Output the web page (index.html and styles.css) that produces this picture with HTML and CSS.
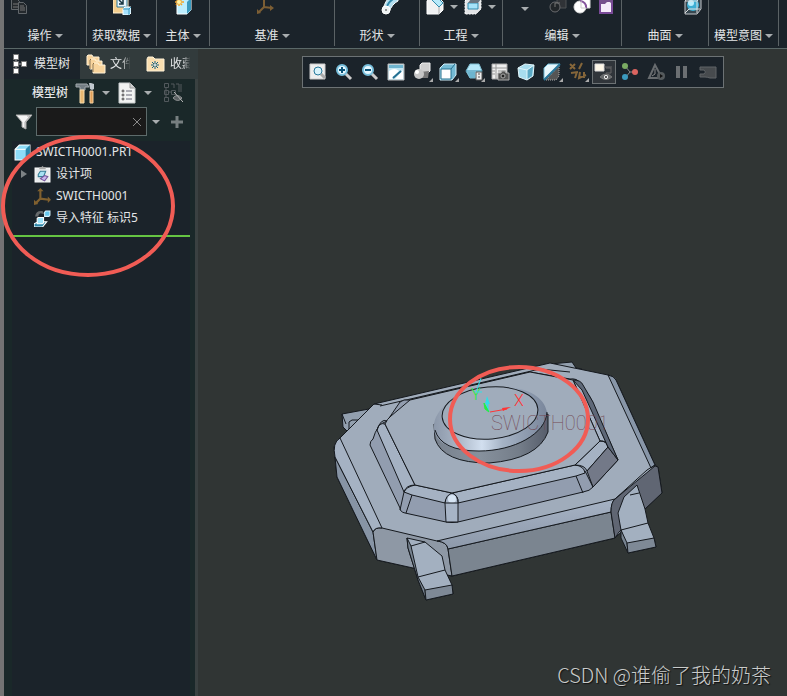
FILE: index.html
```
<!DOCTYPE html>
<html lang="zh-CN">

<head>
    <meta charset="UTF-8">
    <meta name="viewport" content="width=device-width, initial-scale=1.0">
    <link rel="stylesheet" href="styles.css">
    <title>SWICTH0001.PRT</title>
</head>

<body>
    <div class="ribbon">
        <div class="group">
            <div class="icons icons-start">
                <svg class="icon" viewBox="0 0 18 18"><g fill="#24292d" stroke="#62676b"><path d="M1.500 2.500h6l2 2v8h-8z"/><path d="M8.500 5.500h5l3 3v8h-8z"/></g><path d="M3 7h5M3 10h5M10 9h4M10 11h5M10 13h5" stroke="#777"/></svg>
            </div>
            <button class="group-label">操作<span class="caret"></span></button>
        </div>
        <div class="group">
            <div class="icons">
                <svg class="icon" viewBox="0 0 18 18"><path d="M0 0h15v16H0z" fill="#f4ce8e" stroke="#fff0d0"/><path d="M4 0h10v10H4z" fill="#e8f5fc" stroke="#2d7899"/><path d="M6 3l4 4M10 3v4H6" stroke="#173642" stroke-width="1.500" fill="none"/><path d="M10 12l2-2h6v6l-2 2h-6z" fill="#a5e1fc" stroke="#fff"/><path d="M10 12h6v6M16 12l2-2" stroke="#3999be" fill="none"/></svg>
            </div>
            <button class="group-label">获取数据<span class="caret"></span></button>
        </div>
        <div class="group">
            <div class="icons">
                <svg class="icon" viewBox="0 0 18 18"><path d="M3 4l3-3h11v12l-4 4H3z" fill="#bdeeff" stroke="#fff"/><path d="M13 5l4-4v12l-4 4z" fill="#3b9bc0"/><path d="M5 0v9M1 5h9M2 2l6 6M8 2L2 8" stroke="#f5a62b" stroke-width="1.500"/><circle cx="5" cy="5" r="2" fill="#fff3a8"/></svg>
            </div>
            <button class="group-label">主体<span class="caret"></span></button>
        </div>
        <div class="group">
            <div class="icons icons-axis">
                <svg class="icon" viewBox="0 0 18 18"><path d="M8 0v10L3 15M8 10l8 1" fill="none" stroke="#7c5e34" stroke-width="2"/><path d="M1 12l4 4-4 1zM14 8l4 3-4 3z" fill="#7c5e34"/></svg>
            </div>
            <button class="group-label">基准<span class="caret"></span></button>
        </div>
        <div class="group">
            <div class="icons icons-sweep">
                <svg class="icon" viewBox="0 0 18 18"><path d="M2 12Q5 2 10-1h7v5q-6 3-9 11z" fill="#b4dfef" stroke="#fff"/><path d="M6 9Q9 3 14 1" stroke="#338bad" stroke-width="2" fill="none"/><circle cx="5" cy="13" r="4" fill="#eef3f4" stroke="#fff"/><circle cx="5" cy="13" r="1" fill="#777"/></svg>
            </div>
            <button class="group-label">形状<span class="caret"></span></button>
        </div>
        <div class="group">
            <div class="icons icons-spread">
                <svg class="icon" viewBox="0 0 18 18"><path d="M1 4l3-4h8l5 5v8l-4 4H1z" fill="#f0f1f2" stroke="#fff"/><path d="M6 0h5l6 6-4 4-7-7z" fill="#b7e9fa" stroke="#338bad"/><path d="M13 10v7" stroke="#aaa"/></svg>
                <span class="caret"></span>
                <svg class="icon" viewBox="0 0 18 18"><path d="M1 4l4-4h12v12l-5 5H1z" fill="#e2e4e6" stroke="#fff" stroke-dasharray="2 1"/><path d="M4 6h10v6H4z" fill="#a6e3f9" stroke="#338bad"/><path d="M4 6l3-4h10l-3 4" fill="#697580"/></svg>
                <span class="caret"></span>
            </div>
            <button class="group-label">工程<span class="caret"></span></button>
        </div>
        <div class="group">
            <div class="icons icons-edit">
                <span class="caret"></span>
                <span class="spacer"></span>
                <svg class="icon" viewBox="0 0 18 18"><path d="M8 0h9v11H8z" fill="#303337" stroke="#4f5255"/><circle cx="6" cy="10" r="5" fill="#222629" stroke="#6a6b6e"/><path d="M6 10V6h5" stroke="#777" fill="none"/></svg>
                <svg class="icon" viewBox="0 0 18 18"><path d="M8 0h9v11H8z" fill="#fff" stroke="#ddd"/><circle cx="7" cy="10" r="6" fill="#fff" stroke="#ddd"/><path d="M7 4a6 6 0 0 1 6 7" fill="none" stroke="#85569d" stroke-width="2"/><path d="M8 4v7h5" fill="none" stroke="#ccc"/></svg>
                <svg class="icon" viewBox="0 0 18 18"><path d="M3 4h12v12H3z" fill="#f5ecfa" stroke="#7a4a98" stroke-width="2"/><path d="M0 0h18l-4 6q-3-3-6 1L4 7z" fill="#76518d"/></svg>
            </div>
            <button class="group-label">编辑<span class="caret"></span></button>
        </div>
        <div class="group">
            <div class="icons icons-end">
                <svg class="icon" viewBox="0 0 18 18"><path d="M1 4l4-4h12v12l-4 5H1z" fill="#384750" stroke="#c5c8cb"/><circle cx="9" cy="8" r="6" fill="#3caed3"/><circle cx="7" cy="6" r="3" fill="#b8edfc"/><path d="M1 4h12v12M13 4l4-4M1 16l4-4h11" fill="none" stroke="#ddd"/></svg>
            </div>
            <button class="group-label">曲面<span class="caret"></span></button>
        </div>
        <div class="group">
            <div class="icons"></div>
            <button class="group-label">模型意图<span class="caret"></span></button>
        </div>
    </div>

    <div class="main">
        <aside class="sidebar">
            <div class="tabs">
                <button class="tab active">
                    <svg class="tab-icon" viewBox="0 0 20 20"><path d="M6 3v14M6 10h8" stroke="#aaa"/><g fill="#fff" stroke="#777"><path d="M3.500.5h5v5h-5zM3.500 7.500h5v5h-5zM3.500 14.500h5v5h-5zM11.500 7.500h5v5h-5z"/></g></svg>
                    <span>模型树</span>
                </button>
                <button class="tab">
                    <svg class="tab-icon" viewBox="0 0 20 20"><g fill="#f8d49c" stroke="#fff2d7"><path d="M1 2l1-1h4l1 2h6v8H1z"/><path d="M4 6l1-1h4l1 2h6v8H4z"/><path d="M7 10l1-1h4l1 2h6v8H7z"/></g><path d="M4 15V6l1-1M7 18v-8l1-1" stroke="#8a6c3e" fill="none"/></svg>
                    <span class="fade">文件</span>
                </button>
                <button class="tab">
                    <svg class="tab-icon" viewBox="0 0 20 20"><path d="M1 5l1-2h5l2 2h9v12H1z" fill="#f9deb0" stroke="#fff2d7"/><path d="M9 7v8M5 11h8M6 8l6 6M12 8l-6 6" stroke="#176080"/><circle cx="9" cy="11" r="1" fill="#fff"/></svg>
                    <span class="fade">收藏</span>
                </button>
            </div>

            <div class="tree-header">
                <strong>模型树</strong>
                <button class="tool" aria-label="设置">
                    <svg viewBox="0 0 20 22"><path d="M1 2h11l2 3h-4v3H5V5H1z" fill="#737d83" stroke="#a1a8ac"/><path d="M5 8h4v13H5z" fill="#e9b871" stroke="#f5dbad"/><path d="M14 1l1 6 2 1 2-1V2l-3-1" fill="#c1c8ce"/><path d="M15 9h3v12h-3z" fill="#df9f59" stroke="#f5d0a0"/></svg>
                </button>
                <span class="caret"></span>
                <button class="tool" aria-label="显示">
                    <svg viewBox="0 0 20 22"><path d="M2 1h11l5 5v15H2z" fill="#f1f3f2" stroke="#c9cdce"/><path d="M13 1v5h5" fill="#ccc" stroke="#999"/><path d="M9 9h6M9 13h6M9 17h6" stroke="#667"/><g fill="#fff" stroke="#444"><circle cx="6" cy="9" r="1"/><circle cx="6" cy="13" r="1"/><circle cx="6" cy="17" r="1"/></g></svg>
                </button>
                <span class="caret"></span>
                <button class="tool tool-last" aria-label="隐藏">
                    <svg viewBox="0 0 20 22"><g fill="none" stroke="#52595d"><path d="M1.500 1.500h4v4h-4zM1.500 8.500h4v4h-4zM1.500 15.500h4v4h-4zM8.500 8.500h4v4h-4zM3 5v11M6 10h3M8 2h3v4M13 2h3v8M18 2v8"/></g><path d="M10 16q4-5 9 0-4 5-9 0z" fill="#5a5f62" stroke="#909394"/><path d="M11 10l9 10" stroke="#bbb"/></svg>
                </button>
            </div>

            <div class="search-row">
                <svg class="filter" viewBox="0 0 18 18"><path d="M1 2h16l-6 7v7l-4-2V9z" fill="#f4f4f4" stroke="#aaa"/><path d="M12 3h3l-5 6v6" fill="none" stroke="#aaa"/></svg>
                <div class="search">
                    <input type="text" aria-label="搜索模型树">
                    <button class="clear" aria-label="清除"><svg viewBox="0 0 8 8"><path d="M0 0l8 8M8 0L0 8" stroke="#8a8a8a"/></svg></button>
                </div>
                <span class="caret"></span>
                <button class="plus" aria-label="添加"><svg viewBox="0 0 12 12"><path d="M6 0v12M0 6h12" stroke="#777f80" stroke-width="3"/></svg></button>
            </div>

            <div class="tree">
                <div class="node root">
                    <svg viewBox="0 0 16 16"><path d="M1 5l4-4h10v10l-4 4H1z" fill="#8edcf8" stroke="#fff"/><path d="M11 5l4-4v10l-4 4z" fill="#2b87ac"/><path d="M1 5h10" stroke="#fff"/></svg>
                    <span>SWICTH0001.PRT</span>
                </div>
                <div class="node">
                    <span class="expander"></span>
                    <svg viewBox="0 0 16 16"><path d="M1 2h14v13H1z" fill="#e9ebed" stroke="#fff"/><path d="M5 3V1h2l1-1 1 1h2v2z" fill="#aaa"/><path d="M4 8l2-3h5l-2 5H4z" fill="#a9e1f3" stroke="#367e96"/><path d="M6 12l4-3 3 1-3 4z" fill="#c8b8ed" stroke="#77569d"/></svg>
                    <span>设计项</span>
                </div>
                <div class="node leaf">
                    <svg viewBox="0 0 16 16"><path d="M6 2v8l-4 4M6 10l8 1" fill="none" stroke="#80602f" stroke-width="2"/><path d="M3 3l3-3 3 3zM0 11l4 4-4 1zM13 8l3 3-3 3z" fill="#80602f"/></svg>
                    <span>SWICTH0001</span>
                </div>
                <div class="node leaf">
                    <svg viewBox="0 0 16 16"><path d="M1 6q1-6 7-5l2 3-4-1q-2 1-2 3z" fill="#686b6d"/><path d="M11 1h4v4l-1 1h-4V2z" fill="#66c7ed" stroke="#d7f4ff"/><path d="M0 13l4-2h8l-4 5H0z" fill="#2c86a8" stroke="#fff"/><path d="M3 8l1-1h5v5l-1 1H3z" fill="#9de4fb" stroke="#fff"/></svg>
                    <span>导入特征 标识5</span>
                </div>
                <div class="insert-line"></div>
            </div>
        </aside>

        <main class="viewport">
            <div class="view-toolbar">
                <button aria-label="重新调整"><svg viewBox="0 0 20 20"><path d="M2 2h15v15H2z" fill="#eee" stroke="#ccc"/><circle cx="10" cy="9" r="4" fill="#d9f3fb" stroke="#27789a"/><path d="M13 12l4 4" stroke="#aaa" stroke-width="3"/></svg></button>
                <button aria-label="放大"><svg viewBox="0 0 20 20"><path d="M11 11l6 6" stroke="#ccc" stroke-width="3"/><circle cx="8" cy="8" r="5" fill="#e5f8ff" stroke="#76bedb" stroke-width="2"/><path d="M5 8h6M8 5v6" stroke="#0c5478" stroke-width="2"/></svg></button>
                <button aria-label="缩小"><svg viewBox="0 0 20 20"><path d="M11 11l6 6" stroke="#ccc" stroke-width="3"/><circle cx="8" cy="8" r="5" fill="#e5f8ff" stroke="#76bedb" stroke-width="2"/><path d="M5 8h6" stroke="#0c5478" stroke-width="2"/></svg></button>
                <button aria-label="重画"><svg viewBox="0 0 20 20"><path d="M2 2h16v16H2z" fill="#c3e6f2" stroke="#bbb"/><path d="M3 3h14v3H3z" fill="#6fb5cf"/><path d="M3 17V9q6-4 10 0l-7 8zM17 8v9H9z" fill="#fff"/><path d="M7 16l8-7" stroke="#236f91" stroke-width="2"/></svg></button>
                <button class="more" aria-label="渲染"><svg viewBox="0 0 20 20"><path d="M8 3l2-2h8v8l-2 2H8z" fill="#cfcfcf" stroke="#eee"/><path d="M8 10l9-1-1 7H8z" fill="#777"/><circle cx="7" cy="12" r="5" fill="#c6c6c6"/><circle cx="5" cy="10" r="2" fill="#fff"/></svg></button>
                <button class="more" aria-label="显示样式"><svg viewBox="0 0 20 20"><path d="M2 6l4-4h12v11l-4 5H2z" fill="#74bad4" stroke="#d2eff9"/><path d="M3 7h10v10H3z" fill="#fff" stroke="#24708e"/><path d="M13 7l4-5" stroke="#24708e"/></svg></button>
                <button class="more" aria-label="已保存方向"><svg viewBox="0 0 20 20"><path d="M2 9l4-7h9l3 7-4 7H6z" fill="#b6e8f9" stroke="#7ebdd1"/><path d="M2 9h16" stroke="#348aaa" fill="none"/><path d="M3 10h8v6H6z" fill="#6db5cf"/><path d="M12 10h6v8h-6z" fill="#eee" stroke="#555"/><path d="M14 12h2M14 15h2" stroke="#555"/></svg></button>
                <button aria-label="视图管理器"><svg viewBox="0 0 20 20"><path d="M2 2h15v15H2z" fill="#eee" stroke="#aaa"/><path d="M2 6h15M6 2v15M8 9h8M2 9h3M2 12h3" stroke="#999"/><path d="M8 11h3l1-2h3l1 2h3v7H8z" fill="#555" stroke="#aaa"/><circle cx="13" cy="14" r="2" fill="#222" stroke="#aaa"/></svg></button>
                <button aria-label="透视图"><svg viewBox="0 0 20 20"><path d="M2 6l7-4 9 1-1 11-6 4-8-3z" fill="#a8ddee" stroke="#e2f6fb"/><path d="M11 8l6-4-1 10-5 3z" fill="#5ba9c4"/><path d="M2 6l9 2 7-5M11 8v10" stroke="#e2f6fb" fill="none"/></svg></button>
                <button class="more" aria-label="截面"><svg viewBox="0 0 20 20"><path d="M2 17V6l4-4h12z" fill="#e8f7fc" stroke="#6eb8d2"/><path d="M17 4v10l-3 4H4z" fill="#555" stroke="#aaa" stroke-dasharray="1 1"/><path d="M2 18L18 2" stroke="#2a779a" stroke-width="2"/></svg></button>
                <button class="more" aria-label="基准显示"><svg viewBox="0 0 20 20"><g stroke="#85663a" stroke-width="2" fill="none"><path d="M2 2l5 5M7 2L2 7M14 1l-3 6M9 10l-2 6M3 11l7-1M12 10l-1 6 7-3M16 10v6"/></g></svg></button>
                <button class="pressed" aria-label="注释显示"><svg viewBox="0 0 20 20"><path d="M1 2h9v7H1z" fill="#fff8e7" stroke="#ddd"/><path d="M12 6h5v5h-5M10 5h8" fill="none" stroke="#666"/><path d="M6 15q6-6 12 0-6 5-12 0z" fill="#66696b" stroke="#777"/><circle cx="12" cy="15" r="2" fill="#fff"/><circle cx="12" cy="15" r="1" fill="#222"/></svg></button>
                <button aria-label="旋转中心"><svg viewBox="0 0 20 20"><path d="M5 4l5 6-5 6M10 10h6" fill="none" stroke="#888"/><circle cx="5" cy="4" r="3" fill="#7bab63"/><circle cx="5" cy="15" r="3" fill="#3b9abe"/><circle cx="15" cy="10" r="3" fill="#db6460"/></svg></button>
                <button aria-label="仿真"><svg viewBox="0 0 20 20"><path d="M9 3L3 16h13z" fill="none" stroke="#686c6f" stroke-width="2"/><path d="M9 7v5l-3 2" stroke="#888" fill="none"/><circle cx="15" cy="14" r="4" fill="#555a5d"/><path d="M14 12l3 2-3 2z" fill="#111"/></svg></button>
                <button aria-label="暂停"><svg viewBox="0 0 20 20"><path d="M4 4h4v12H4zM11 4h4v12h-4z" fill="#6b6f72"/></svg></button>
                <button aria-label="结束"><svg viewBox="0 0 20 20"><path d="M2 5h16v11h-6q-3-1-5-1H2v-3h4q3-2 0-4H2z" fill="#474b4e" stroke="#606467"/></svg></button>
            </div>

            <svg class="model" viewBox="198 88 589 608" preserveAspectRatio="xMinYMin meet">
                <defs>
                    <linearGradient id="cap" x1="434" x2="548" y1="0" y2="0" gradientUnits="userSpaceOnUse">
                        <stop offset="0" stop-color="#8c98aa"/><stop offset=".18" stop-color="#a4b0c0"/><stop offset=".42" stop-color="#d2dfef"/><stop offset=".6" stop-color="#a5b3c5"/><stop offset="1" stop-color="#78859a"/>
                    </linearGradient>
                    <linearGradient id="wall" x1="434" x2="548" y1="0" y2="0" gradientUnits="userSpaceOnUse">
                        <stop offset="0" stop-color="#78818d"/><stop offset=".4" stop-color="#87919d"/><stop offset=".75" stop-color="#747d89"/><stop offset="1" stop-color="#565d6b"/>
                    </linearGradient>
                    <linearGradient id="rim" x1="0" x2="0" y1="0" y2="1">
                        <stop offset="0" stop-color="#a6b3c5"/><stop offset="1" stop-color="#8d99aa"/>
                    </linearGradient>
                </defs>
                <g stroke="#15191e" stroke-linejoin="round">
                    <!-- back contacts -->
                    <path d="M342 414l27-5 5-5 6 10-33 17-4-4z" fill="#929fae"/>
                    <path d="M342 414l4 10M349 430v-8l3-2h7" fill="none"/>
                    <path d="M550 364l22-2 4 6 6 1v6h-32z" fill="#929fae"/>
                    <!-- body -->
                    <path d="M374 404l176-41 58 12q6 1 8 5l39 85 3 2 4 26-17 16-30 29-163 38-39-8-36-8-40-83-3-30q1-6 6-9z" fill="#a0acbb"/>
                    <path d="M335 457l2 20 40 83-4-28z" fill="#8794a5"/>
                    <path d="M373 532q2-5 9-4l55 13q10 1 11 8l4 27-39-8-36-8z" fill="#8e98a5"/>
                    <path d="M448 549l163-37 4 26-163 38z" fill="#7b8590"/>
                    <path d="M437 541l178-42q-4 4-4 13l-163 37q-1-7-11-8z" fill="url(#rim)"/>
                    <path d="M611 512q0-10 4-13l40-33 3 1 4 26-17 16-26 23-4 6z" fill="#606673"/>
                    <path d="M340 438q-8 5-5 19l38 75q2-5 9-4z" fill="#a5b2c3"/>
                    <path d="M608 375q6 1 8 5l39 85-4 3z" fill="#8896a8"/>
                    <path d="M615 499l32-29 8-5M380 406l160-37 30 3M374 404l8 1" fill="none"/>
                    <!-- raised step -->
                    <path d="M370 445q0-4 3-6 4-15 14-18l13-19q3-3 10-2l120-28 40 7q7-1 10 4l10 14 28 63-25 27q-3 4-10 5l-125 30q-6 1-12 0l-41-9q-5-1-5-5z" fill="#929daf"/>
                    <path d="M377 430q2-8 8-6l30 61q-9 2-11 7zM404 492q2-7 11-7l37 8q-6 3-7 10l-33-8zM458 503q1-7-6-10l123-28q9 1 10 8l-9 3zM575 465l25-24q7 0 8 6l-21 24q-2-6-12-6zM573 380q6 0 9 5l26 62q-2-7-8-6z" fill="#a5b2c3"/>
                    <path d="M445 503q1-8 7-10 6 2 6 10v19h-12z" fill="#a7b4c6"/>
                    <ellipse cx="452" cy="499" rx="4" ry="4" fill="#d7e5f4" stroke="none"/>
                    <path d="M445 503h13" fill="none"/>
                    <path d="M587 471l21-24 10 13-25 27z" fill="#737988"/>
                    <path d="M573 380q8 0 10 5l10 17 25 58-10-13-26-57z" fill="#5e6878"/>
                    <path d="M410 400l120-28 43 8 27 61-25 24-123 28-37-8-30-61q2-5 6-8z" fill="#a0acbb"/>
                    <path d="M404 492l-4 18M412 495l-6 18M576 476l7 17M585 471l8 16M387 421q-6-3-10 9" fill="none"/>
                    <!-- push button -->
                    <path d="M434 424l1 15q8 24 54 24 49-4 59-31v-18z" fill="url(#wall)"/>
                    <path d="M434 428c-1-18 20-34 48-40 32-5 61 3 65 24 1 19-31 39-68 39-28 0-45-9-45-23z" fill="url(#cap)" stroke="none"/>
                    <path d="M435 430q6 21 44 21c35 0 67-17 68-39" fill="none"/>
                    <ellipse cx="490" cy="413" rx="48" ry="26" transform="rotate(-5 490 413)" fill="#a0acbb"/>
                    <!-- front contacts -->
                    <path d="M407 538l18 4 17 14 3 14 7 15 1 9-27 6-8-20-10-32z" fill="#a3b0c0"/>
                    <path d="M407 538l4 8 7 31 7 13 1 10-8-20-10-32z" fill="#778390"/>
                    <path d="M425 590l27-5 1 9-27 6z" fill="#7e8996"/>
                    <path d="M411 546l14-4M418 577l27-7" fill="none"/>
                    <path d="M637 485l8 24 3 14 6 15 2 9-28 6-7-23-3-17 6-16z" fill="#a3b0c0"/>
                    <path d="M621 530l6 13 1 10-7-15z" fill="#778390"/>
                    <path d="M627 543l27-5 2 9-28 6z" fill="#7e8996"/>
                    <path d="M630 495l9-2M621 530l27-7" fill="none"/>
                </g>
                <!-- coordinate system -->
                <path d="M488 411l-1-10" stroke="#30dfe6" stroke-width="2"/>
                <path d="M485 404l2-8 3 8z" fill="#30dfe6"/>
                <path d="M489 412l-5-9 1 6z" fill="#25ed43" stroke="#25ed43"/>
                <path d="M490 412l17-3" stroke="#ff3434"/>
                <path d="M502 408l9-1-8 4z" fill="#ff3434"/>
                <text class="axis axis-y" x="471" y="400">Y</text>
                <path d="M481 378l-5 14h6" fill="none" stroke="#30dfe6"/>
                <text class="axis axis-x" x="514" y="406">X</text>
                <text class="csys-name" x="491" y="430">SWICTH0001</text>
                <ellipse cx="519" cy="419" rx="69" ry="52" fill="none" stroke="#f15c55" stroke-width="4"/>
            </svg>
            <div class="watermark">CSDN @谁偷了我的奶茶</div>
        </main>
        <svg class="tree-mark" viewBox="0 0 176 144"><ellipse cx="88" cy="72" rx="85" ry="69" fill="none" stroke="#f15c55" stroke-width="4"/></svg>
    </div>
</body>

</html>
```
FILE: styles.css
```
* {
    margin: 0;
    padding: 0;
    box-sizing: border-box;
}

body {
    font-family: "Noto Sans", "Noto Sans CJK SC", sans-serif;
    font-size: 12px;
    line-height: 18px;
    color: #e4e6e7;
    background-color: #737373;
    padding-left: 4px;
    display: flex;
    flex-direction: column;
    height: 100vh;
    overflow: hidden;
}

button {
    font: inherit;
    color: inherit;
    background: none;
    border: none;
    cursor: pointer;
}

svg {
    display: block;
    flex-shrink: 0;
}

.caret {
    flex-shrink: 0;
    border: 4px solid transparent;
    border-top-color: #a9adaf;
    border-bottom: none;
}

/* Ribbon */
.ribbon {
    display: grid;
    grid-template-columns: 83fr 70fr 53fr 125fr 85fr 83fr 119fr 87fr 70fr 8fr;
    background-color: #1b232a;
    border-bottom: 1px solid #5b6868;
    padding-bottom: 2px;
}

.group {
    min-width: 0;
    border-right: 1px solid #5b6265;
}

.icons {
    display: flex;
    align-items: flex-start;
    justify-content: center;
    height: 26px;
    overflow: hidden;
}

.icon {
    width: 18px;
    height: 18px;
    margin-top: -3px;
}

.icons .caret {
    margin-top: 5px;
}

.icons-start {
    justify-content: flex-start;
    padding-left: 6px;
}

.icons-axis {
    padding-right: 14px;
}

.icons-sweep {
    padding-left: 26px;
}

.icons-spread {
    justify-content: space-between;
    padding: 0 6px;
}

.icons-edit {
    gap: 6px;
    justify-content: flex-end;
    padding-right: 6px;
}

.icons-edit .caret {
    margin-top: 7px;
}

.spacer {
    width: 8px;
}

.icons-end {
    justify-content: flex-end;
    padding-right: 6px;
}

.group-label {
    display: flex;
    align-items: center;
    justify-content: center;
    gap: 3px;
    width: 100%;
    height: 20px;
    white-space: nowrap;
}

.main {
    display: flex;
    flex: 1;
    min-height: 0;
    position: relative;
}

/* Model tree panel */
.sidebar {
    display: flex;
    flex-direction: column;
    width: 194px;
    flex-shrink: 0;
    background-color: #1a2829;
    border-right: 3px solid #3a4141;
}

.tabs {
    display: flex;
    height: 30px;
    margin-right: -3px;
    background-color: #323b3c;
}

.tab {
    display: flex;
    align-items: center;
    flex-shrink: 0;
    gap: 4px;
    padding: 0 6px;
    white-space: nowrap;
}

.tab.active {
    width: 76px;
    background-color: #1b232a;
}

.tab-icon {
    width: 20px;
    height: 20px;
}

.fade {
    -webkit-mask-image: linear-gradient(to right, #000 50%, transparent 85%);
    mask-image: linear-gradient(to right, #000 50%, transparent 85%);
}

.tree-header {
    display: flex;
    align-items: center;
    gap: 7px;
    height: 28px;
    padding-left: 28px;
}

.tree-header strong {
    font-weight: 500;
}

.tool svg {
    width: 20px;
    height: 22px;
}

.tool-last {
    margin-left: 4px;
}

.search-row {
    display: flex;
    align-items: center;
    height: 29px;
    padding-left: 11px;
}

.filter {
    width: 18px;
    height: 18px;
    margin-right: 3px;
}

.search {
    position: relative;
    width: 111px;
    margin-right: 5px;
}

.search input {
    display: block;
    width: 100%;
    height: 29px;
    padding: 0 20px 0 6px;
    color: inherit;
    font: inherit;
    background-color: #1a1a1a;
    border: 1px solid #5d6b6b;
}

.clear {
    position: absolute;
    top: 11px;
    right: 6px;
}

.clear svg {
    width: 8px;
    height: 8px;
}

.plus {
    margin-left: 11px;
}

.plus svg {
    width: 12px;
    height: 12px;
}

.tree {
    flex: 1;
    margin: 5px 5px 0 8px;
    background-color: #1b232a;
}

.node {
    display: flex;
    align-items: center;
    gap: 5px;
    height: 22px;
    padding-left: 9px;
    white-space: nowrap;
}

.node svg {
    width: 17px;
    height: 17px;
}

.node.root {
    padding-left: 2px;
}

.node.leaf {
    padding-left: 22px;
}

.expander {
    margin-right: 2px;
    border: 4px solid transparent;
    border-left: 6px solid #7d8285;
    border-right: none;
}

.insert-line {
    height: 2px;
    margin-top: 6px;
    background-color: #66c443;
}

.tree-mark {
    position: absolute;
    top: 85px;
    left: -4px;
    width: 176px;
    height: 144px;
    pointer-events: none;
}

/* Graphics area */
.viewport {
    position: relative;
    flex: 1;
    min-width: 0;
    background-color: #303534;
}

.view-toolbar {
    display: flex;
    width: fit-content;
    margin: 7px 0 0 104px;
    padding: 2px;
    background-color: #1b232a;
    border: 1px solid #6c7274;
}

.view-toolbar button {
    display: grid;
    place-items: center;
    position: relative;
    width: 26px;
    height: 26px;
}

.view-toolbar svg {
    width: 20px;
    height: 20px;
}

.view-toolbar .pressed {
    width: 24px;
    height: 24px;
    margin: 1px;
    background-color: #30353a;
    border: 1px solid #6c7274;
}

.more::after {
    content: "";
    position: absolute;
    right: 2px;
    bottom: 3px;
    border: 2px solid #aaa;
    border-top-color: transparent;
    border-left-color: transparent;
}

.model {
    width: 100%;
}

.axis {
    font-family: Roboto, sans-serif;
    font-weight: 300;
    font-size: 16px;
}

.axis-x {
    fill: #ff3434;
}

.axis-y {
    fill: #25ed43;
}

.csys-name {
    font-family: Roboto, sans-serif;
    font-weight: 100;
    font-size: 20px;
    fill: #744a55;
}

.watermark {
    position: absolute;
    right: 16px;
    bottom: 6px;
    font-family: "Noto Sans CJK SC", sans-serif;
    font-weight: 300;
    font-size: 20px;
    line-height: 30px;
    color: #c9cbca;
    text-shadow: 1px 1px 1px #111;
}
```
